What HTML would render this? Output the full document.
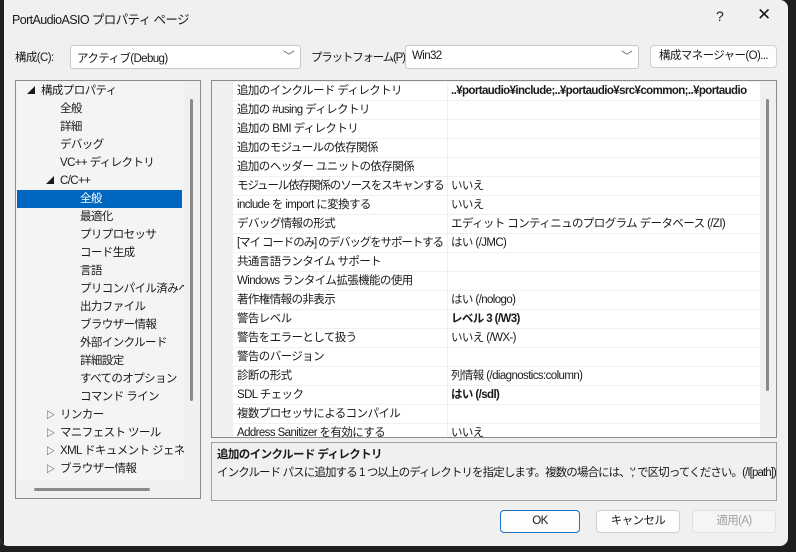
<!DOCTYPE html>
<html><head><meta charset="utf-8"><style>
*{margin:0;padding:0;box-sizing:border-box}
body{width:796px;height:552px;background:#1f1f1f;font-family:"Liberation Sans","Noto Sans CJK JP",sans-serif;font-size:11.5px;letter-spacing:-0.6px;color:#1a1a1a;position:relative;overflow:hidden}
.dlg{position:absolute;left:0;top:0;width:788px;height:546px;background:#f0f0f0;border-radius:0 8px 8px 8px;overflow:hidden}
.a{position:absolute;white-space:nowrap}
.box{position:absolute;background:#fff;border:1px solid #c8c8c8;border-radius:3px}
.btn{position:absolute;background:#fdfdfd;border:1px solid #d0d0d0;border-radius:4px;text-align:center;line-height:21px}
.tree{position:absolute;left:15px;top:80px;width:186px;height:419px;border:1px solid #8c8c8c;background:#f0f0f0}
.list{position:absolute;left:1px;top:1px;width:167px;height:399px;background:#f4f4f4;overflow:hidden}
.ti{position:absolute;height:18px;line-height:18px;white-space:nowrap}
.grid{position:absolute;left:211px;top:80px;width:566px;height:358px;border:1px solid #8c8c8c;background:#f0f0f0;overflow:hidden}
.row{position:absolute;left:21px;width:527px;height:19px;background:#fff;border-bottom:1px solid #eef0f5;line-height:18px}
.row span{position:absolute;left:4px;width:210px;overflow:hidden;white-space:nowrap}
.row b{position:absolute;left:218px;width:308px;overflow:hidden;white-space:nowrap;font-weight:normal}
.row i{position:absolute;left:214px;top:0;width:1px;height:19px;background:#eef0f5}
</style></head><body>
<div class="dlg">
<div style="position:absolute;left:0;top:0;width:4px;height:552px;background:#1f1f1f"></div>
<div class="a" style="left:12px;top:9px;font-size:12.5px">PortAudioASIO プロパティ ページ</div>
<div class="a" style="left:716px;top:8px;font-size:14px">?</div>
<div class="a" style="left:757px;top:5px;font-size:17px">✕</div>
<div class="a" style="left:15px;top:49px">構成(C):</div>
<div class="box" style="left:70px;top:45px;width:231px;height:24px"><span class="a" style="left:6px;top:4px">アクティブ(Debug)</span><span class="a" style="right:6px;top:2px;color:#555">﹀</span></div>
<div class="a" style="left:311px;top:49px;letter-spacing:-1.2px">プラットフォーム(P):</div>
<div class="box" style="left:405px;top:45px;width:234px;height:24px"><span class="a" style="left:6px;top:4px">Win32</span><span class="a" style="right:6px;top:2px;color:#555">﹀</span></div>
<div class="btn" style="left:650px;top:45px;width:127px;height:23px">構成マネージャー(O)...</div>

<div class="tree"><div class="list">
<div class="ti" style="left:10px;top:0;font-size:8px">◢</div><div class="ti" style="left:24px;top:0">構成プロパティ</div>
<div class="ti" style="left:43px;top:18px">全般</div>
<div class="ti" style="left:43px;top:36px">詳細</div>
<div class="ti" style="left:43px;top:54px">デバッグ</div>
<div class="ti" style="left:43px;top:72px">VC++ ディレクトリ</div>
<div class="ti" style="left:29px;top:90px;font-size:8px">◢</div><div class="ti" style="left:43px;top:90px">C/C++</div>
<div class="ti" style="left:0;top:108px;width:165px;background:#0067c0;color:#fff;padding-left:63px">全般</div>
<div class="ti" style="left:63px;top:126px">最適化</div>
<div class="ti" style="left:63px;top:144px">プリプロセッサ</div>
<div class="ti" style="left:63px;top:162px">コード生成</div>
<div class="ti" style="left:63px;top:180px">言語</div>
<div class="ti" style="left:63px;top:198px">プリコンパイル済みヘッダー</div>
<div class="ti" style="left:63px;top:216px">出力ファイル</div>
<div class="ti" style="left:63px;top:234px">ブラウザー情報</div>
<div class="ti" style="left:63px;top:252px">外部インクルード</div>
<div class="ti" style="left:63px;top:270px">詳細設定</div>
<div class="ti" style="left:63px;top:288px">すべてのオプション</div>
<div class="ti" style="left:63px;top:306px">コマンド ライン</div>
<div class="ti" style="left:29px;top:324px;font-size:9px">▷</div><div class="ti" style="left:43px;top:324px">リンカー</div>
<div class="ti" style="left:29px;top:342px;font-size:9px">▷</div><div class="ti" style="left:43px;top:342px">マニフェスト ツール</div>
<div class="ti" style="left:29px;top:360px;font-size:9px">▷</div><div class="ti" style="left:43px;top:360px">XML ドキュメント ジェネレーター</div>
<div class="ti" style="left:29px;top:378px;font-size:9px">▷</div><div class="ti" style="left:43px;top:378px">ブラウザー情報</div>
</div>
<div style="position:absolute;left:174px;top:18px;width:3px;height:302px;background:#8a8a8a;border-radius:2px"></div>
<div style="position:absolute;left:18px;top:407px;width:116px;height:3px;background:#8a8a8a;border-radius:2px"></div>
</div>

<div class="grid">
<div class="row" style="top:1px"><i></i><span>追加のインクルード ディレクトリ</span><b style="font-weight:bold">..¥portaudio¥include;..¥portaudio¥src¥common;..¥portaudio</b></div>
<div class="row" style="top:20px"><i></i><span>追加の #using ディレクトリ</span></div>
<div class="row" style="top:39px"><i></i><span>追加の BMI ディレクトリ</span></div>
<div class="row" style="top:58px"><i></i><span>追加のモジュールの依存関係</span></div>
<div class="row" style="top:77px"><i></i><span>追加のヘッダー ユニットの依存関係</span></div>
<div class="row" style="top:96px"><i></i><span style="letter-spacing:-1.1px">モジュール依存関係のソースをスキャンする</span><b>いいえ</b></div>
<div class="row" style="top:115px"><i></i><span>include を import に変換する</span><b>いいえ</b></div>
<div class="row" style="top:134px"><i></i><span>デバッグ情報の形式</span><b>エディット コンティニュのプログラム データベース (/ZI)</b></div>
<div class="row" style="top:153px"><i></i><span style="letter-spacing:-1.1px">[マイ コードのみ] のデバッグをサポートする</span><b>はい (/JMC)</b></div>
<div class="row" style="top:172px"><i></i><span>共通言語ランタイム サポート</span></div>
<div class="row" style="top:191px"><i></i><span>Windows ランタイム拡張機能の使用</span></div>
<div class="row" style="top:210px"><i></i><span>著作権情報の非表示</span><b>はい (/nologo)</b></div>
<div class="row" style="top:229px"><i></i><span>警告レベル</span><b style="font-weight:bold">レベル 3 (/W3)</b></div>
<div class="row" style="top:248px"><i></i><span>警告をエラーとして扱う</span><b>いいえ (/WX-)</b></div>
<div class="row" style="top:267px"><i></i><span>警告のバージョン</span></div>
<div class="row" style="top:286px"><i></i><span>診断の形式</span><b>列情報 (/diagnostics:column)</b></div>
<div class="row" style="top:305px"><i></i><span>SDL チェック</span><b style="font-weight:bold">はい (/sdl)</b></div>
<div class="row" style="top:324px"><i></i><span>複数プロセッサによるコンパイル</span></div>
<div class="row" style="top:343px"><i></i><span>Address Sanitizer を有効にする</span><b>いいえ</b></div>
<div style="position:absolute;left:554px;top:18px;width:3px;height:292px;background:#8a8a8a;border-radius:2px"></div>
</div>

<div style="position:absolute;left:211px;top:442px;width:566px;height:59px;border:1px solid #a0a0a0;background:#f0f0f0;overflow:hidden">
<div class="a" style="left:5px;top:3px;font-weight:bold">追加のインクルード ディレクトリ</div>
<div class="a" style="left:5px;top:21px;letter-spacing:-0.9px">インクルード パスに追加する 1 つ以上のディレクトリを指定します。複数の場合には、';' で区切ってください。(/I[path])</div>
</div>
<div class="btn" style="left:500px;top:510px;width:80px;height:23px;border-color:#1a73c8">OK</div>
<div class="btn" style="left:596px;top:510px;width:84px;height:23px">キャンセル</div>
<div class="btn" style="left:692px;top:510px;width:84px;height:23px;background:#f5f5f5;color:#a0a0a0;border-color:#e0e0e0">適用(A)</div>
</div>
</body></html>
